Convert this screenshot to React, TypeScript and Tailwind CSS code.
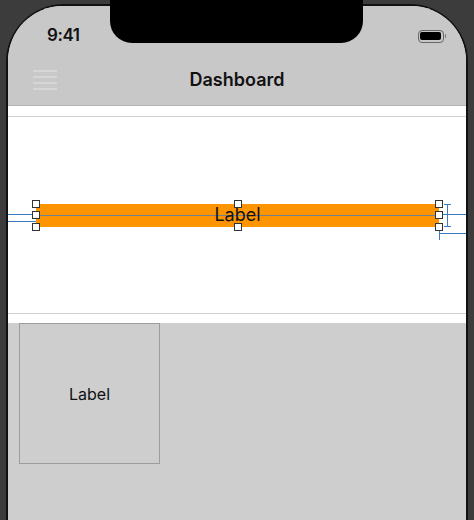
import React from "react";

const Handle = ({ className }: { className: string }) => (
  <div className={`absolute w-[8px] h-[8px] bg-white border border-[#333] -translate-x-1/2 -translate-y-1/2 ${className}`} />
);

export default function App() {
  return (
    <div
      className="relative w-[474px] h-[520px] bg-[#3c3c3c] overflow-hidden"
      style={{ fontFamily: "Inter, 'Liberation Sans', sans-serif" }}
    >
      {/* inner black rim */}
      <div className="absolute left-[6px] top-[4px] w-[462px] h-[530px] rounded-t-[58px] bg-[#111]" />
      {/* screen */}
      <div className="absolute left-[8px] top-[6px] w-[458px] h-[520px] rounded-t-[55px] overflow-hidden bg-[#cecece] flex flex-col">
        {/* status + nav */}
        <div className="h-[100px] bg-[#c9c8c9] flex flex-col border-b border-[#b3b3b3]">
          <div className="h-[52px] flex items-center justify-between pl-[39px] pr-[20px] pt-[8px]">
            <span className="text-[17px] font-semibold text-[#111] tracking-tight">9:41</span>
            <div className="flex items-center gap-[1px]">
              <div className="w-[26px] h-[13px] rounded-[4px] border border-[#666] p-[1.5px]">
                <div className="w-full h-full rounded-[2px] bg-black" />
              </div>
              <div className="w-[1.5px] h-[4px] bg-[#777] rounded-r" />
            </div>
          </div>
          <div className="flex-1 flex items-center justify-between pl-[25px] pr-[25px] pb-[4px]">
            <div className="flex flex-col gap-[4px] opacity-50">
              <div className="w-[24px] h-[2px] bg-[#e4e4e4]" />
              <div className="w-[24px] h-[2px] bg-[#e4e4e4]" />
              <div className="w-[24px] h-[2px] bg-[#e4e4e4]" />
              <div className="w-[24px] h-[2px] bg-[#e4e4e4]" />
            </div>
            <span className="text-[18px] font-semibold text-[#111]">Dashboard</span>
            <div className="w-[24px]" />
          </div>
        </div>
        {/* white section */}
        <div className="bg-white pt-[10px] pb-[9px]">
          <div className="relative h-[198px] border-t border-b border-[#d0d0d0] flex items-center pl-[28px] pr-[27px]">
            {/* leading constraint lines */}
            <div className="absolute left-0 top-[97px] w-[28px] h-[1px] bg-[#3a7cc4]" />
            <div className="absolute left-0 top-[104px] w-[28px] h-[1px] bg-[#3a7cc4]" />
            {/* trailing constraint lines */}
            <div className="absolute right-0 top-[97px] w-[27px] h-[1px] bg-[#3a7cc4]" />
            <div className="absolute right-[18px] top-[87px] w-[1px] h-[22px] bg-[#3a7cc4]" />
            <div className="absolute right-[15px] top-[87px] w-[7px] h-[1px] bg-[#3a7cc4]" />
            <div className="absolute right-[15px] top-[109px] w-[7px] h-[1px] bg-[#3a7cc4]" />
            <div className="absolute right-0 top-[116px] w-[26px] h-[1px] bg-[#3a7cc4]" />
            <div className="absolute right-[26px] top-[111px] w-[1px] h-[12px] bg-[#3a7cc4]" />

            <div className="relative h-[23px] w-full bg-[#fe9500] flex items-center justify-center">
              <div className="absolute left-0 right-0 top-[11px] h-[1px] bg-[#6f8290]" />
              <span className="relative text-[18px] text-[#111] leading-none">Label</span>
              <Handle className="left-0 top-0" />
              <Handle className="left-0 top-1/2" />
              <Handle className="left-0 top-full" />
              <Handle className="left-1/2 top-0" />
              <Handle className="left-1/2 top-full" />
              <Handle className="left-full top-0" />
              <Handle className="left-full top-1/2" />
              <Handle className="left-full top-full" />
            </div>
          </div>
        </div>
        {/* bottom section */}
        <div className="flex-1 bg-[#cecece] pl-[11px]">
          <div className="w-[141px] h-[141px] border border-[#9c9c9c] flex items-center justify-center">
            <span className="text-[16px] text-[#111]">Label</span>
          </div>
        </div>
      </div>

      {/* notch */}
      <div className="absolute left-[110px] top-0 w-[253px] h-[43px] bg-black rounded-b-[22px]" />
    </div>
  );
}
